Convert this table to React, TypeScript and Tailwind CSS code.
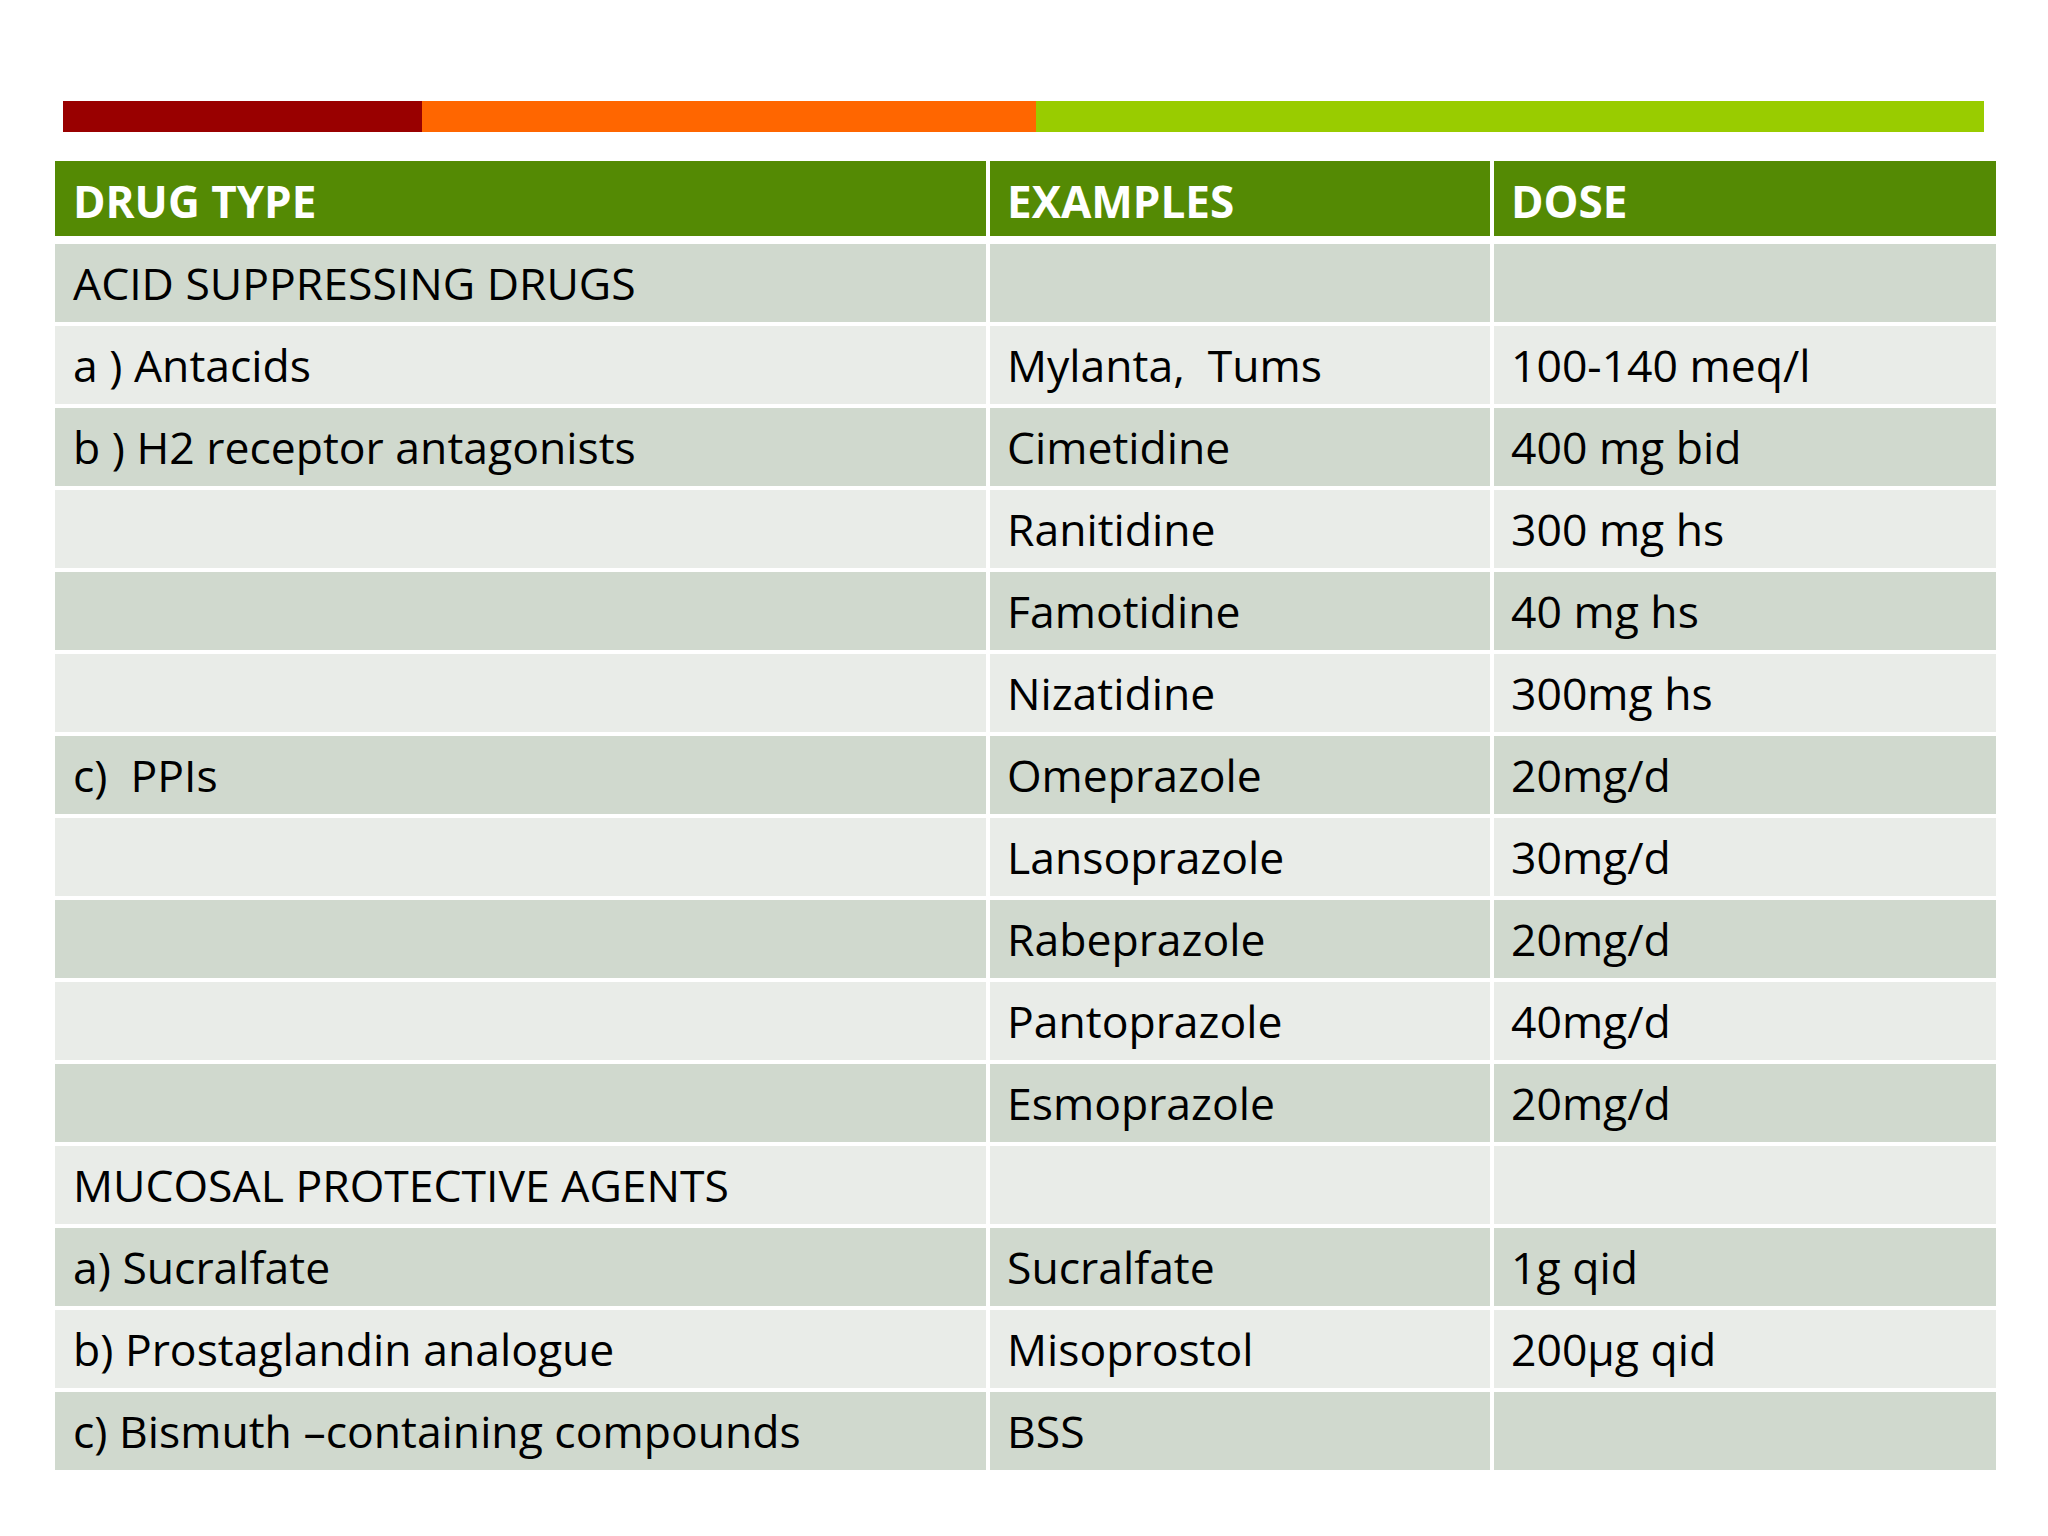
const rows: [string, string, string][] = [
  ["ACID SUPPRESSING DRUGS", "", ""],
  ["a ) Antacids", "Mylanta,  Tums", "100-140 meq/l"],
  ["b ) H2 receptor antagonists", "Cimetidine", "400 mg bid"],
  ["", "Ranitidine", "300 mg hs"],
  ["", "Famotidine", "40 mg hs"],
  ["", "Nizatidine", "300mg hs"],
  ["c)  PPIs", "Omeprazole", "20mg/d"],
  ["", "Lansoprazole", "30mg/d"],
  ["", "Rabeprazole", "20mg/d"],
  ["", "Pantoprazole", "40mg/d"],
  ["", "Esmoprazole", "20mg/d"],
  ["MUCOSAL PROTECTIVE AGENTS", "", ""],
  ["a) Sucralfate", "Sucralfate", "1g qid"],
  ["b) Prostaglandin analogue", "Misoprostol", "200µg qid"],
  ["c) Bismuth –containing compounds", "BSS", ""],
];

const grid = "grid grid-cols-[931px_500px_502px] gap-x-[4px]";
const cell = "flex items-center whitespace-pre leading-none";

export default function App() {
  return (
    <div
      className="w-[2048px] h-[1536px] bg-white pt-[101px]"
      style={{ fontFamily: "'Open Sans', Lato, sans-serif" }}
    >
      <div className="ml-[63px] flex h-[31px] w-[1921px]">
        <div className="w-[359px] bg-[#990000]" />
        <div className="w-[614px] bg-[#ff6600]" />
        <div className="flex-1 bg-[#99cc00]" />
      </div>

      <div className="ml-[55px] mt-[29px] w-[1941px]">
        <div className={grid + " h-[75px] text-[44px] font-bold text-white"}>
          <div className={cell + " bg-[#548a04] pl-[18px] pt-[4px]"}>DRUG TYPE</div>
          <div className={cell + " bg-[#548a04] pl-[17px] pt-[4px]"}>EXAMPLES</div>
          <div className={cell + " bg-[#548a04] pl-[17px] pt-[4px]"}>DOSE</div>
        </div>
        <div className="mt-[8px] flex flex-col gap-y-[4px] text-[44.5px] text-black">
          {rows.map((r, i) => {
            const bg = i % 2 === 0 ? "bg-[#d0d9ce]" : "bg-[#e9ece8]";
            return (
              <div key={i} className={grid + " h-[78px]"}>
                <div className={cell + " pl-[18px] " + bg}>{r[0]}</div>
                <div className={cell + " pl-[17px] " + bg}>{r[1]}</div>
                <div className={cell + " pl-[17px] " + bg}>{r[2]}</div>
              </div>
            );
          })}
        </div>
      </div>
    </div>
  );
}
